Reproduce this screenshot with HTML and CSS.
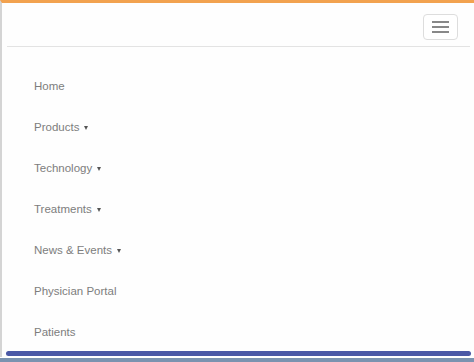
FILE: index.html
```html
<!DOCTYPE html>
<html lang="en">
<head>
    <meta charset="UTF-8">
    <meta name="viewport" content="width=device-width, initial-scale=1.0">
    <title>Menu</title>
    <link rel="stylesheet" href="styles.css">
</head>
<body>
    <div class="page">
        <div class="navbar">
            <button class="toggle" type="button" aria-label="Toggle navigation">
                <span class="bar"></span>
                <span class="bar"></span>
                <span class="bar"></span>
            </button>
        </div>
        <ul class="menu">
            <li><a href="#">Home</a></li>
            <li><a href="#">Products <span class="caret"></span></a></li>
            <li><a href="#">Technology <span class="caret"></span></a></li>
            <li><a href="#">Treatments <span class="caret"></span></a></li>
            <li><a href="#">News &amp; Events <span class="caret"></span></a></li>
            <li><a href="#">Physician Portal</a></li>
            <li><a href="#">Patients</a></li>
        </ul>
        <div class="scrollbar"></div>
    </div>
    <div class="footer-strip"></div>
</body>
</html>
```

FILE: styles.css
```css
html, body {
    margin: 0;
    padding: 0;
    background: #fff;
}
body {
    font-family: "Liberation Sans", Arial, sans-serif;
    overflow: hidden;
    height: 362px;
}
.page {
    display: flex;
    flex-direction: column;
    border-top: 3px solid #f2a24f;
    border-left: 2px solid #d4d4d4;
    height: 357px;
    box-sizing: border-box;
    background: #fefefe;
}
.navbar {
    display: flex;
    justify-content: flex-end;
    margin: 0 4px 0 5px;
    padding: 11px 12px 6px 0;
    border-bottom: 1px solid #e3e3e3;
}
.toggle {
    width: 35px;
    height: 26px;
    border: 1px solid #ddd;
    border-radius: 4px;
    background: #fff;
    display: flex;
    flex-direction: column;
    justify-content: center;
    align-items: center;
    gap: 3px;
    padding: 0;
}
.toggle .bar {
    display: block;
    width: 17px;
    height: 2px;
    background: #888;
}
.menu {
    flex: 1;
    overflow: hidden;
    list-style: none;
    margin: 0;
    padding: 18px 0 0 32px;
}
.menu li {
    height: 41px;
    display: flex;
    align-items: center;
}
.menu a {
    color: #7d7d7d;
    font-size: 11.5px;
    text-decoration: none;
    display: flex;
    align-items: center;
}
.caret {
    display: inline-block;
    width: 0;
    height: 0;
    margin: 2px 0 0 5px;
    border-left: 2.5px solid transparent;
    border-right: 2.5px solid transparent;
    border-top: 4px solid #555;
}
.scrollbar {
    flex: none;
    height: 5px;
    margin: 0 3px 1px 4px;
    background: #4a58a6;
    border-radius: 3px;
}
.footer-strip {
    height: 4px;
    margin-top: 1px;
    background: #7b93b0;
}
```
